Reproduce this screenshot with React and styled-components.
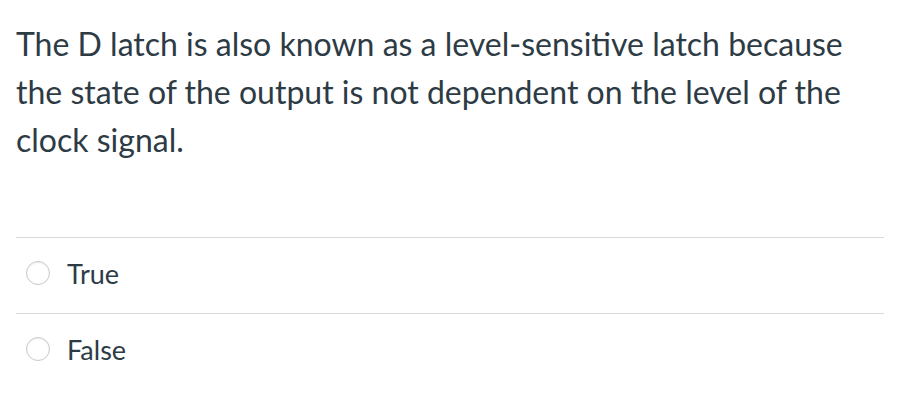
import React from "react";
import styled, { createGlobalStyle } from "styled-components";

const Global = createGlobalStyle`
  html, body { margin: 0; padding: 0; background: #fff; }
  body { font-family: Lato, "Helvetica Neue", Arial, sans-serif; color: #2d3b45; }
`;

const Page = styled.div`
  padding: 20px 22px 0 16px;
`;

const Question = styled.p`
  margin: 0;
  max-width: 850px;
  font-size: 32px;
  line-height: 48px;
  color: #2d3b45;
`;

const Answers = styled.div`
  margin-top: 73px;
`;

const Answer = styled.label`
  display: flex;
  align-items: center;
  box-sizing: border-box;
  height: 76px;
  padding-bottom: 5px;
  border-top: 1px solid #d9d9d9;
  padding-left: 10px;
  gap: 17px;
  font-size: 27px;
  color: #2d3b45;
  cursor: pointer;
`;

const Radio = styled.span`
  box-sizing: border-box;
  width: 24px;
  height: 24px;
  border-radius: 50%;
  border: 1px solid #c8c8c8;
  background: #fff;
  box-shadow: inset 0 1px 2px rgba(0,0,0,0.07);
  flex: none;
`;

export default function App() {
  return (
    <>
      <Global />
      <Page>
        <Question>
          The D latch is also known as a level-sensitive latch because the state of the output is not dependent on the level of the clock signal.
        </Question>
        <Answers>
          <Answer><Radio />True</Answer>
          <Answer><Radio />False</Answer>
        </Answers>
      </Page>
    </>
  );
}
